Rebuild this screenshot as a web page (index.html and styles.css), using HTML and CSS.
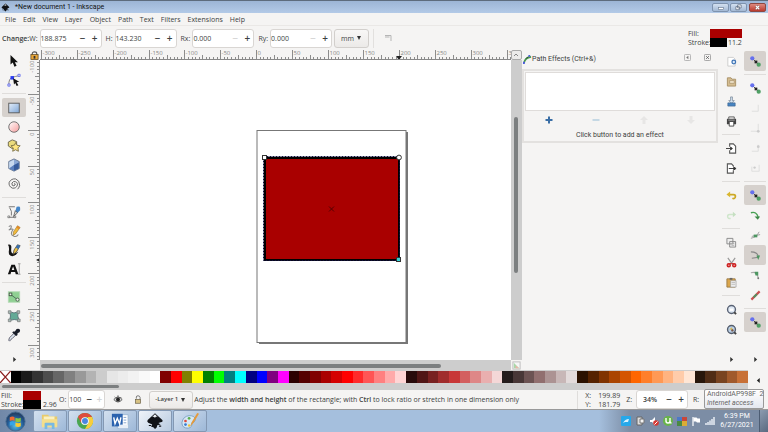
FILE: index.html
```html
<!DOCTYPE html>
<html lang="en">
<head>
<meta charset="utf-8">
<title>*New document 1 - Inkscape</title>
<link rel="stylesheet" href="styles.css">
</head>
<body>
<svg class="defs" aria-hidden="true">
  <defs>
    <linearGradient id="gBlue" x1="0" y1="0" x2="1" y2="1"><stop offset="0" stop-color="#e4eefa"/><stop offset="1" stop-color="#7fa6d6"/></linearGradient>
    <linearGradient id="gPink" x1="0" y1="0" x2="1" y2="1"><stop offset="0" stop-color="#fff"/><stop offset="1" stop-color="#f79c9c"/></linearGradient>
    <radialGradient id="gOrb" cx=".5" cy=".7" r=".6"><stop offset="0" stop-color="#59c4ee"/><stop offset=".7" stop-color="#245a94"/><stop offset="1" stop-color="#234168"/></radialGradient>
    <symbol id="nodes" viewBox="0 0 12 12"><path d="M3 3l6 6" stroke="#444" stroke-width="1"/><circle cx="2.500" cy="2.500" r="2.300" fill="#6670ee"/><circle cx="9.500" cy="9.500" r="2.300" fill="#4fa065"/><rect x="5" y="5" width="3" height="3" fill="#222"/></symbol>
    <symbol id="inkscape" viewBox="0 0 16 16"><path d="M8 1l6.500 6q1 1.500-1.500 2l-2 .8 2 1.200-3 .8-.5 2L8 15l-1.500-1.500-2-.5L5.500 11 2 9.500Q.5 8.500 1.500 7z" fill="#101216"/><path d="M8 2L5.500 4.500 6.800 4.300l1.200.7 1-1 1.500.6z" fill="#eef2f6"/><path d="M2.500 12h2M11.500 12.500h2" stroke="#101216"/></symbol>
    <symbol id="more" viewBox="0 0 6 6"><path d="M1.500 0l3.500 3-3.500 3z" fill="#333"/></symbol>
  </defs>
</svg>

<header class="titlebar">
  <svg class="app-icon" viewBox="0 0 16 16"><use href="#inkscape"/></svg>
  <h1>*New document 1 - Inkscape</h1>
  <div class="window-buttons">
    <button aria-label="Minimize"><svg viewBox="0 0 16 8"><rect x="5.500" y="4" width="6" height="2.500" fill="#fff" stroke="#64758c" stroke-width=".7"/></svg></button>
    <button aria-label="Restore"><svg viewBox="0 0 16 8"><path d="M7 1h4v3.500H7zM5 3h4v3.500H5z" fill="#fff" stroke="#536278" stroke-width=".8"/></svg></button>
    <button class="close" aria-label="Close"><svg viewBox="0 0 16 8"><path d="M6 2l4 4M10 2L6 6" stroke="#633" stroke-width="2.400"/><path d="M6 2l4 4M10 2L6 6" stroke="#fff" stroke-width="1.500"/></svg></button>
  </div>
</header>

<nav class="menubar">
  <a href="#">File</a><a href="#">Edit</a><a href="#">View</a><a href="#">Layer</a><a href="#">Object</a><a href="#">Path</a><a href="#">Text</a><a href="#">Filters</a><a href="#">Extensions</a><a href="#">Help</a>
</nav>

<div class="options">
  <b>Change:</b>
  <label for="w">W:</label>
  <div class="spin"><input id="w" value="188.875"><button aria-label="Decrease width">−</button><button aria-label="Increase width">+</button></div>
  <label for="h">H:</label>
  <div class="spin"><input id="h" value="143.230"><button aria-label="Decrease height">−</button><button aria-label="Increase height">+</button></div>
  <label for="rx">Rx:</label>
  <div class="spin"><input id="rx" value="0.000"><button disabled aria-label="Decrease Rx">−</button><button aria-label="Increase Rx">+</button></div>
  <label for="ry">Ry:</label>
  <div class="spin"><input id="ry" value="0.000"><button disabled aria-label="Decrease Ry">−</button><button aria-label="Increase Ry">+</button></div>
  <div class="drop unit"><select aria-label="Units"><option>mm</option></select></div>
  <button class="corner-btn" aria-label="Make corners sharp"><svg viewBox="0 0 8 8"><path d="M1 1.500h6V7M1 3h4.500" fill="none" stroke="#b5b5b5"/></svg></button>
  <div class="style-indicator">
    <span>Fill:</span><i class="red"></i>
    <span>Stroke:</span><i class="black"></i><span>11.2</span>
  </div>
</div>

<main class="work">
  <div class="toolbox">
    <button aria-label="Select"><svg viewBox="0 0 16 16"><path d="M4 1v11l2.600-2.200L8.500 14.500l2.500-1.200-2-4H12.500z" fill="#111"/></svg></button>
    <button aria-label="Edit nodes"><svg viewBox="0 0 16 16"><path d="M2 14Q2 6 6 5q3-1 8-2" fill="none" stroke="#777"/><path d="M1 12.500h2.500V15H1zM12.500 1.500H15V4h-2.500z" fill="#dde" stroke="#6872f0"/><path d="M4 3.500h4v4H4z" fill="#2b3cf0"/><path d="M7 6l7 4-3 .5 2 3.500-2 .8-1.500-3.300L8 13z" fill="#111"/></svg></button>
    <hr>
    <button class="on" aria-label="Rectangle"><svg viewBox="0 0 16 16"><rect x="2" y="2.500" width="12" height="11" fill="url(#gBlue)" stroke="#555"/></svg></button>
    <button aria-label="Ellipse"><svg viewBox="0 0 16 16"><circle cx="8" cy="8" r="6" fill="url(#gPink)" stroke="#666"/></svg></button>
    <button aria-label="Star"><svg viewBox="0 0 16 16"><path d="M6 1l5 2v5L6 11 1.500 8V3.500z" fill="#eadb7c" stroke="#665f43"/><path d="M10 4l1.500 3.200 3.500.5-2.500 2.500.5 3.800-3.200-1.700L6.500 14l.7-3.800L4.500 7.700 8.500 7z" fill="#ffe680" stroke="#776d43"/></svg></button>
    <button aria-label="3D box"><svg viewBox="0 0 16 16"><path d="M8 1l6 3v8l-6 3-6-3V4z" fill="#8ca9d6" stroke="#66738a"/><path d="M2.500 4.500L8 2v6l-5.500 4z" fill="#c8d9ee"/><path d="M8 8l5.500-3v7L8 14.500z" fill="#365b9b"/><path d="M8 8v6.500L2.500 12z" fill="#5c80bd"/></svg></button>
    <button aria-label="Spiral"><svg viewBox="0 0 16 16"><path d="M8 8q1.500-1 1.500.8Q8 11 6 9.500 4.500 6.500 7.500 5.200 12 4.800 12 9 10.500 13.500 6 12.700 1.500 10.500 2.500 6 5 1.500 10 2.200 14.500 4 14.500 9.500 13.500 13 12 14" fill="none" stroke="#666" stroke-width="1.100"/></svg></button>
    <hr>
    <button aria-label="Pen"><svg viewBox="0 0 16 16"><path d="M2 2h7M3 3q3 4 2 9M1 14h9" fill="none" stroke="#666"/><path d="M1 12.500h2v2H1zM8 12.500h2v2H8z" fill="#fff" stroke="#555" stroke-width=".7"/><path d="M11 2q4-1 4 1v3l-3 3-2.500-2z" fill="#4787c8"/><path d="M9.500 6.500L12 9l-4.500 4z" fill="#ddd" stroke="#444" stroke-width=".8"/></svg></button>
    <button aria-label="Pencil"><svg viewBox="0 0 16 16"><path d="M2 3q3-2 3 0T2 7q4-2 5-1-2 3-2 5t3 3 5-2" fill="none" stroke="#888" stroke-width="1.200"/><path d="M12 2l3 2-5 7-3 2 .3-4z" fill="#f2b93a" stroke="#80652a" stroke-width=".6"/><path d="M12 2l3 2-1.500 2-3-2z" fill="#e08a2a"/></svg></button>
    <button aria-label="Calligraphy"><svg viewBox="0 0 16 16"><path d="M1 2q4-1 4 3-1 7 2 7 3 0 6-2-3 5-7 5-4 0-4-5 1-6-1-8z" fill="#161616"/><path d="M12 2l3 1-4 7-4 3 1-5z" fill="#e8bf45" stroke="#333" stroke-width=".8"/><path d="M12 2l3 1-2 4-3-2z" fill="#386faf"/></svg></button>
    <button aria-label="Text"><svg viewBox="0 0 16 16"><path fill-rule="evenodd" d="M1 14L5 3h4l4 11h-3l-.7-2.500H4.700L4 14zm4.400-4.800h3L7 5z" fill="#111"/><path d="M14 2v12M12.500 2h3M12.500 14h3" stroke="#999"/></svg></button>
    <hr>
    <button aria-label="Gradient"><svg viewBox="0 0 16 16"><rect x="1.500" y="2" width="13" height="12" fill="#8fd092" stroke="#b5d9b6"/><path d="M4 5l8 6" stroke="#465"/><rect x="2.500" y="3.500" width="3" height="3" fill="#e8f5e8" stroke="#454"/><circle cx="12" cy="11" r="1.800" fill="#e8f5e8" stroke="#454"/></svg></button>
    <button aria-label="Mesh"><svg viewBox="0 0 16 16"><path d="M3 3q5 3 10 0-2 5 1 10-6-2-11 0 2-5 0-10z" fill="#63aa96" stroke="#4d6f72"/><path d="M1.500 2h3v3h-3zM11.500 2h3v3h-3zM1.500 11.500h3v3h-3zM12 11.500h3v3h-3z" fill="#a9bdb9" stroke="#777" stroke-width=".8"/></svg></button>
    <button aria-label="Dropper"><svg viewBox="0 0 16 16"><path d="M2 14q0-3 3-5l3-3 2 2-4 4q-2 1-3 3z" fill="#dde5ee" stroke="#556"/><path d="M7 4l2 0 2-3q4-1 4 2 0 2-3 3v2l-1.500 1L6 5z" fill="#171b26"/></svg></button>
    <button class="more" aria-label="More tools"><svg viewBox="0 0 6 6"><use href="#more"/></svg></button>
  </div>

  <section class="document">
    <div class="lock"><svg viewBox="0 0 10 10"><path d="M2.500 5V3q0-2 2.500-2t2.500 2v2" fill="none" stroke="#555" stroke-width="1.200"/><rect x="1" y="4" width="8" height="5.500" fill="#e9a638" stroke="#5b4520" stroke-width=".8"/><rect x="4" y="5.500" width="2" height="3" fill="#333"/></svg></div>
    <svg class="ruler-h" id="rulerH"></svg>
    <button class="scroll-up" aria-label="Scroll up"><svg viewBox="0 0 8 8"><path d="M2 5l2-2 2 2" fill="none" stroke="#888"/></svg></button>
    <svg class="ruler-v" id="rulerV"></svg>
    <svg class="canvas" role="img" aria-label="Drawing">
      <rect x="219" y="72" width="149" height="212" fill="#777"/>
      <rect x="217" y="70.500" width="149" height="212" fill="#fff" stroke="#777" stroke-width="1"/>
      <rect x="225" y="98" width="134" height="102" fill="#a90000" stroke="#000" stroke-width="2"/>
      <rect x="223.500" y="96.500" width="136" height="104" fill="none" stroke="#11113a" stroke-width="1" stroke-dasharray="2 1"/>
      <path d="M289 146.500l5 5M294 146.500l-5 5" stroke="#500"/>
      <rect x="222.500" y="95.500" width="4" height="4" fill="#fff" stroke="#333"/>
      <circle cx="359" cy="97.500" r="2.400" fill="#fff" stroke="#333"/>
      <rect x="356.500" y="197.500" width="4" height="4" fill="#36d6d6" stroke="#333"/>
    </svg>
    <div class="scroll-v"><i></i></div>
    <div class="scroll-h"><i></i></div>
    <div class="cms"><svg viewBox="0 0 10 10"><rect x="1" y="1" width="8" height="8" fill="#f6f6f6" stroke="#bbb"/><path d="M2 2l6 6H2z" fill="#a7d9a8"/><path d="M4 5l4 3H4z" fill="#efb0a8"/></svg></div>
  </section>

  <aside class="dock">
    <div class="dock-head">
      <svg viewBox="0 0 10 10"><path d="M1 9q1-6 8-7" fill="none" stroke="#4a9a50" stroke-width="2"/><path d="M0 7.500h2v2.500H0zM6 0h2v2H6z" fill="#4c5be0"/><path d="M3 4l3-2" stroke="#243"/></svg>
      <h2>Path Effects (Ctrl+&amp;)</h2>
      <button aria-label="Iconify dock"><svg viewBox="0 0 8 8"><rect x=".5" y=".5" width="7" height="7" rx="1" fill="none" stroke="#aaa"/><path d="M5 2v4L2.500 4z" fill="#777"/></svg></button>
      <button aria-label="Close dock"><svg viewBox="0 0 8 8"><rect x=".5" y=".5" width="7" height="7" rx="1" fill="none" stroke="#999"/><path d="M2.500 2.500l3 3M5.500 2.500l-3 3" stroke="#555"/></svg></button>
    </div>
    <div class="effects">
      <div class="effect-list"></div>
      <div class="effect-actions">
        <button aria-label="Add effect"><svg viewBox="0 0 8 8"><path d="M4 .5v7M.5 4h7" stroke="#3a6ea5" stroke-width="2"/></svg></button>
        <button aria-label="Remove effect" disabled><svg viewBox="0 0 8 8"><path d="M.5 4h7" stroke="#c5d8e4" stroke-width="2"/></svg></button>
        <button aria-label="Move up" disabled><svg viewBox="0 0 8 8"><path d="M4 0l4 4H5.500v4h-3V4H0z" fill="#e7e6e5"/></svg></button>
        <button aria-label="Move down" disabled><svg viewBox="0 0 8 8"><path d="M4 8l4-4H5.500V0h-3v4H0z" fill="#e7e6e5"/></svg></button>
      </div>
      <p>Click button to add an effect</p>
    </div>
  </aside>

  <div class="bar commands">
    <button aria-label="New"><svg viewBox="0 0 12 12"><path d="M2 1.500h6l2 2V11H2z" fill="#fff" stroke="#ccc"/><circle cx="8.500" cy="6.500" r="2" fill="#dce9f8" stroke="#3d73b4" stroke-width="1.400"/></svg></button>
    <button aria-label="Open"><svg viewBox="0 0 12 12"><path d="M1.500 2h4l1 1.500h4V11h-9z" fill="#d5bd91" stroke="#a99066"/><path d="M4 5h5v3H4z" fill="#eee2c9" stroke="#9a825c" stroke-width=".6"/></svg></button>
    <button aria-label="Save"><svg viewBox="0 0 12 12"><path d="M5 1h2v4h2L6 8 3 5h2z" fill="#d5e4f2" stroke="#68788a" stroke-width=".7"/><path d="M2 7.500h8V11H2z" fill="#4684c2" stroke="#40658f" stroke-width=".7"/></svg></button>
    <button aria-label="Print"><svg viewBox="0 0 12 12"><path d="M3 3V1h6v2" fill="none" stroke="#555"/><path d="M1 3h10v6H1z" fill="#444"/><path d="M3.500 6h5v5h-5z" fill="#fff" stroke="#444"/><path d="M2.500 4.500h7" stroke="#aaa"/></svg></button>
    <hr>
    <button aria-label="Import"><svg viewBox="0 0 12 12"><path d="M4 4V1h4l2.500 2.500V11H4V8" fill="#fff" stroke="#555" stroke-width="1.200"/><path d="M0 6h5M5 4.500L7 6 5 7.500z" stroke="#333" fill="#333"/></svg></button>
    <button aria-label="Export"><svg viewBox="0 0 12 12"><path d="M8 4V3L6 1H1.500v10H8V8" fill="#fff" stroke="#555" stroke-width="1.200"/><path d="M3 6h6M8.500 4.500L11 6 8.500 7.500z" stroke="#333" fill="#333"/></svg></button>
    <hr>
    <button aria-label="Undo"><svg viewBox="0 0 12 12"><path d="M3 5h5q3 0 2 3-1 2-3 1" fill="none" stroke="#cda925" stroke-width="2"/><path d="M4.500 1.500v6.500L.5 5z" fill="#d9b62e"/></svg></button>
    <button aria-label="Redo" disabled><svg viewBox="0 0 12 12"><path d="M9 5H4q-3 0-2 3 1 2 3 1" fill="none" stroke="#cfe6cb" stroke-width="1.600"/><path d="M7.500 2v6L11 5z" fill="#c5dfc1"/></svg></button>
    <hr>
    <button aria-label="Copy"><svg viewBox="0 0 12 12"><path d="M1 1.500h6.500v6H1zM4 5h6.500v6H4z" fill="#eee" stroke="#888"/><path d="M6 7h3M6 9h3" stroke="#aaa"/></svg></button>
    <button aria-label="Cut"><svg viewBox="0 0 12 12"><path d="M2 1l5 7M10 1L5 8" stroke="#999" stroke-width="1.300"/><path d="M6 7L3 7.500M6 7l3 .5" stroke="#c22"/><circle cx="3" cy="9" r="1.700" fill="#e88" stroke="#cc2424" stroke-width="1.500"/><circle cx="9" cy="9" r="1.700" fill="#e88" stroke="#cc2424" stroke-width="1.500"/></svg></button>
    <button aria-label="Paste"><svg viewBox="0 0 12 12"><path d="M1 2h9v9H1z" fill="#dba64c" stroke="#9b7b45"/><path d="M4 1h3v2H4z" fill="#666"/><path d="M5 4h6v7H5z" fill="#eee" stroke="#999" stroke-width=".7"/><path d="M6 6h4M6 8h4" stroke="#aaa" stroke-width=".7"/></svg></button>
    <hr>
    <button aria-label="Zoom selection"><svg viewBox="0 0 12 12"><circle cx="6" cy="6" r="4.300" fill="#dce6f2" stroke="#596273" stroke-width="1.500"/><path d="M4 5h4v2.500H4z" fill="#fff"/><path d="M9 9l2 2" stroke="#444" stroke-width="2"/></svg></button>
    <button aria-label="Zoom drawing"><svg viewBox="0 0 12 12"><circle cx="6" cy="6" r="4.300" fill="#b9cfe8" stroke="#555d6b" stroke-width="1.500"/><path d="M3.500 6L6 3.500l2 3z" fill="#d8ba5c"/><circle cx="7" cy="7" r="1.300" fill="#754"/><path d="M9 9l2 2" stroke="#444" stroke-width="2"/></svg></button>
    <button class="more" aria-label="More commands"><svg viewBox="0 0 6 6"><use href="#more"/></svg></button>
  </div>

  <div class="bar snap">
    <button class="on" aria-label="Enable snapping"><svg><use href="#nodes"/></svg></button>
    <hr>
    <button aria-label="Snap bounding boxes"><svg><use href="#nodes"/></svg></button>
    <button disabled aria-label="Snap edges"><svg viewBox="0 0 12 12"><path d="M9 2v7H2" fill="none" stroke="#ddd"/></svg></button>
    <button disabled aria-label="Snap corners"><svg viewBox="0 0 12 12"><path d="M9 1v8H1" fill="none" stroke="#ddd"/><circle cx="9" cy="9" r="1.500" fill="#ccc"/></svg></button>
    <button disabled aria-label="Snap edge midpoints"><svg viewBox="0 0 12 12"><path d="M9 2v7H2" fill="none" stroke="#ddd"/><circle cx="9" cy="4" r="1.500" fill="#ccc"/></svg></button>
    <button disabled aria-label="Snap centers"><svg viewBox="0 0 12 12"><path d="M10 2v7H2V4" fill="none" stroke="#ddd"/><circle cx="5" cy="5" r="1.300" fill="#ccc"/></svg></button>
    <hr>
    <button class="on" aria-label="Snap nodes"><svg><use href="#nodes"/></svg></button>
    <button aria-label="Snap paths"><svg viewBox="0 0 12 12"><path d="M1 3q6-2 8 5" fill="none" stroke="#46a052" stroke-width="1.500"/><path d="M5 7l6 0-2.500 3.500z" fill="#3b8846"/></svg></button>
    <button aria-label="Snap intersections"><svg viewBox="0 0 12 12"><path d="M1 9q6-1 9-7M2 7l9-2" fill="none" stroke="#999"/><path d="M4 5h4v3H4z" fill="#4d9661"/></svg></button>
    <button class="on" aria-label="Snap cusp nodes"><svg viewBox="0 0 12 12"><path d="M1 2q8 0 8 6l-7 1" fill="none" stroke="#888" stroke-width="1.200"/><path d="M7 6h4l-2 5z" fill="#4d9661"/></svg></button>
    <button aria-label="Snap smooth nodes"><svg viewBox="0 0 12 12"><path d="M1 3q7-2 8 6" fill="none" stroke="#aaa" stroke-width="1.200"/><path d="M5 2h4v4H6z" fill="#4d9661"/><circle cx="9" cy="9" r="1" fill="#777"/></svg></button>
    <button aria-label="Snap midpoints"><svg viewBox="0 0 12 12"><path d="M1.500 10.500L10.500 1.500" stroke="#c94f4f" stroke-width="2.400"/><path d="M4 8l3.500-3.500" stroke="#4d9661" stroke-width="2"/></svg></button>
    <hr>
    <button class="on" aria-label="Snap others"><svg><use href="#nodes"/></svg></button>
    <button class="more" aria-label="More snapping"><svg viewBox="0 0 6 6"><use href="#more"/></svg></button>
  </div>
</main>

<div class="palette">
  <div class="palette-body">
    <div class="swatches" id="swatches">
      <button class="none" aria-label="No color"><svg viewBox="0 0 11 12" preserveAspectRatio="none"><path d="M0 0l11 12M11 0L0 12" stroke="#8c2020" stroke-width="1.300"/></svg></button>
    </div>
    <div class="palette-scroll"><i></i></div>
  </div>
  <button class="palette-menu" aria-label="Palette menu"><svg viewBox="0 0 6 6"><path d="M4.500 0L1 3l3.500 3z" fill="#222"/></svg></button>
</div>

<footer class="status">
  <div class="paint">
    <span>Fill:</span><i class="red"></i><span></span>
    <span>Stroke:</span><i class="black"></i><span>2.96</span>
  </div>
  <label for="op">O:</label>
  <div class="spin opacity"><input id="op" value="100"><button aria-label="Less opaque">−</button><button disabled aria-label="More opaque">+</button></div>
  <button class="tiny" aria-label="Layer visibility"><svg viewBox="0 0 12 10"><path d="M1 5q5-6 10 0-5 6-10 0z" fill="#ddd" stroke="#444"/><circle cx="6" cy="5" r="2.400" fill="#222"/><path d="M2 2l1 1M6 0v2M10 2L9 3" stroke="#444"/></svg></button>
  <button class="tiny" aria-label="Layer lock"><svg viewBox="0 0 12 10"><path d="M4 4V2q0-1.500 2-1.500t2.500 2V5" fill="none" stroke="#666"/><rect x="3" y="5" width="6" height="4.500" fill="#d8c283" stroke="#665c40" stroke-width=".8"/></svg></button>
  <div class="drop layer"><select aria-label="Layer"><option>-Layer 1</option></select></div>
  <p class="hint">Adjust the <b>width and height</b> of the rectangle; with <b>Ctrl</b> to lock ratio or stretch in one dimension only</p>
  <dl class="coords"><dt>X:</dt><dd>199.89</dd><dt>Y:</dt><dd>181.79</dd></dl>
  <label for="zoom">Z:</label>
  <div class="spin zoom"><input id="zoom" value="34%"><button aria-label="Zoom out">−</button><button aria-label="Zoom in">+</button></div>
  <div class="rotation">R:
    <div class="tip"><span>AndroidAP998F&nbsp; 2</span><em>Internet access</em></div>
  </div>
</footer>

<div class="taskbar">
  <button class="start" aria-label="Start"><svg viewBox="0 0 22 22"><circle cx="11" cy="11" r="10" fill="url(#gOrb)" stroke="#476b91"/><path d="M5 6.500q3-1.500 5 0v4q-2-1.500-5 0z" fill="#ef6a32"/><path d="M11 7q3 1.500 5.500 0v4q-3 1.500-5.500 0z" fill="#8cc63f"/><path d="M5 11.500q3-1.500 5 0v4q-2-1.500-5 0z" fill="#35a4e8"/><path d="M11 12q3 1.500 5.500 0v4q-3 1.500-5.500 0z" fill="#fbc92e"/></svg></button>
  <button class="task" aria-label="Explorer"><svg viewBox="0 0 20 20"><path d="M1 3h7l1 2h9v11H1z" fill="#e8cb6c"/><path d="M3 5h12v8H3z" fill="#fbf1c0"/><path d="M1 8h17v9H1z" fill="#f4de8c"/><path d="M4 19v-6q0-1 1-1h9q1 0 1 1v6h-3v-4H7v4z" fill="#79b9e2"/></svg></button>
  <button class="task" aria-label="Chrome"><svg viewBox="0 0 20 20"><circle cx="10" cy="10" r="9" fill="#4aa651"/><path d="M2.200 5.500A9 9 0 0 1 17.800 5.500H10L6 12.500z" fill="#dd4b3e"/><path d="M17.800 5.500A9 9 0 0 1 10 19l4-7-1-6.500z" fill="#f8cd3c"/><circle cx="10" cy="10" r="4.300" fill="#fff"/><circle cx="10" cy="10" r="3.300" fill="#4a86e0"/></svg></button>
  <button class="task" aria-label="Word"><svg viewBox="0 0 20 20"><path d="M7 3h12v15H7z" fill="#fff" stroke="#9bb5d2"/><path d="M14 6h3M14 9h3M14 12h3" stroke="#7a9cc8"/><path d="M1 2h12v14H1z" fill="#2b62ae"/><path d="M3 6l1.500 7L7 7l2.500 6L11 6" fill="none" stroke="#fff" stroke-width="1.600"/><path d="M9 14h10v4H9z" fill="#e8eef6"/></svg></button>
  <button class="task active" aria-label="Inkscape"><svg viewBox="0 0 16 16"><use href="#inkscape"/></svg></button>
  <button class="task" aria-label="Paint"><svg viewBox="0 0 20 20"><path d="M1 12Q2 5 9 4q7 0 7 5-1 3-4 3 1 5-4 6-7 0-7-6z" fill="#d6e8f6" stroke="#7aa0c2"/><circle cx="5" cy="10" r="1.500" fill="#e04a3c"/><circle cx="9" cy="7" r="1.500" fill="#5aaf4d"/><circle cx="5" cy="14" r="1.500" fill="#387bd0"/><circle cx="9" cy="15" r="1.300" fill="#f0c33b"/><path d="M18 1l-6 10-2 5 4-4 6-10z" fill="#e49a3c"/></svg></button>
  <div class="tray">
    <svg viewBox="0 0 10 10"><rect width="10" height="10" rx="1" fill="#26a8ea"/><path d="M2 7q2-4 6-4l-1 3-3 0z" fill="#d9f2ff"/></svg>
    <svg viewBox="0 0 10 10"><path d="M2 1h5v8H2z" fill="#ddd" stroke="#666"/><path d="M5 3h4v4H5z" fill="#f4f4f4" stroke="#777"/></svg>
    <svg viewBox="0 0 10 10"><path d="M1 4h2l3-3v8L3 6H1z" fill="#fff"/><circle cx="7" cy="7" r="2.800" fill="#d63a35"/><path d="M5.500 8.500l3-3" stroke="#fff"/></svg>
    <svg viewBox="0 0 10 10"><circle cx="5" cy="5" r="5" fill="#68b548"/><path d="M3 2v3q0 2 2 2t2-2V2M7 5q0 2 1.500 2" fill="none" stroke="#fff" stroke-width="1.400"/></svg>
    <svg viewBox="0 0 10 10"><path d="M0 1h5v4H0z" fill="#4b79c9"/><path d="M5 1h5v4H5z" fill="#c9463a"/><path d="M0 5h5v5H0z" fill="#4b8a43"/><path d="M5 5h5v5H5z" fill="#d9ac35"/></svg>
    <svg viewBox="0 0 10 10"><path d="M2 1v9" stroke="#fff" stroke-width="1.200"/><path d="M2.500 1.500h3l1 1H9v4H6l-1-1H2.500z" fill="#fff"/></svg>
    <svg viewBox="0 0 10 10"><path d="M1 9V7M3 9V6M5 9V4.500M7 9V3M9 9V1" stroke="#e7edf4" stroke-width="1.500"/></svg>
  </div>
  <time class="clock"><span>6:39 PM</span><span>6/27/2021</span></time>
  <button class="show-desktop" aria-label="Show desktop"></button>
</div>
<script src="app.js"></script>
</body>
</html>
```

FILE: styles.css
```css
* { box-sizing: border-box; }
body {
  margin: 0;
  min-height: 100vh;
  display: flex;
  flex-direction: column;
  background: #f5f4f3;
  color: #3c3f41;
  font: 7px/9px "Open Sans", "Noto Sans", sans-serif;
  overflow: hidden;
}
button, input, select { font: inherit; color: inherit; margin: 0; padding: 0; border: 0; background: none; border-radius: 0; }
h1, h2, p, dl, dd { margin: 0; font: inherit; }
svg { display: block; }
hr { border: 0; border-top: 1px solid #dfdddb; margin: 0; }
.defs { position: absolute; width: 0; height: 0; }

.titlebar {
  display: flex;
  align-items: center;
  height: 13px;
  border-top: 1px solid #5d6c7d;
  background: linear-gradient(#9cb5d5, #b3cae7);
  color: #111;
  font-family: Roboto, sans-serif;
}
.app-icon { width: 9px; height: 9px; margin: 0 5px 0 1px; }
.titlebar h1 { flex: 1; }
.window-buttons { display: flex; gap: 1px; padding-right: 2px; }
.window-buttons button { width: 17px; height: 9px; border: 1px solid #7e93ae; border-radius: 2px; background: linear-gradient(#d3e0f0, #a3b9d4); }
.window-buttons svg { width: 100%; height: 7px; }
.window-buttons .close { background: linear-gradient(#de8a80, #bb3a2e); border-color: #8e4842; margin-left: 1px; }

.menubar { display: flex; gap: 7px; align-items: center; height: 13px; padding: 0 5px; border-bottom: 1px solid #eae8e6; }
.menubar a { color: inherit; text-decoration: none; }

.options { display: flex; align-items: center; height: 24px; padding-left: 2px; }
.options label { margin: 0 2px 0 4px; }
.options > b { font-weight: 600; margin-right: -4px; }
.spin { display: flex; width: 62px; height: 19px; background: #fff; border: 1px solid #d9d6d3; border-radius: 3px; }
.spin input { flex: 1; min-width: 0; }
.spin button { width: 12px; font-size: 10px; font-weight: 600; }
.spin button:disabled { color: #d5d5d5; }
.drop { position: relative; border: 1px solid #d2cfcc; border-radius: 3px; background: linear-gradient(#f8f7f6, #eceae8); }
.drop select { appearance: none; width: 100%; height: 100%; }
.drop::after { content: ""; position: absolute; right: 7px; top: 50%; margin-top: -2px; border: 2px solid transparent; border-top: 4px solid #333; border-bottom: 0; pointer-events: none; }
.unit { width: 35px; height: 19px; margin-left: 2px; }
.unit select { padding-left: 6px; }
.corner-btn { width: 24px; height: 19px; margin-left: 4px; border-left: 1px solid #e2e0de; }
.corner-btn svg { width: 8px; height: 8px; margin-left: 10px; }
.style-indicator { display: grid; grid-template-columns: 22px 17px 15px; grid-template-rows: 9px 9px; margin-left: auto; margin-right: 26px; }
.style-indicator .red { grid-column: span 2; }
.style-indicator span:last-child { padding-left: 1px; }
.red { background: #a90000; }
.black { background: #000; }

.work { flex: 1; display: flex; min-height: 0; }
.toolbox { width: 28px; padding: 1px 2px 0; display: flex; flex-direction: column; }
.toolbox button { height: 19px; width: 24px; display: grid; place-items: center; border-radius: 2px; }
.toolbox svg { width: 14px; height: 14px; }
.toolbox hr { margin: 4px 0; }
.on { background: #d6d1cd; }
.toolbox .more, .bar .more { height: 12px; margin-top: auto; margin-bottom: 5px; }
.toolbox .more svg, .bar .more svg { width: 5px; height: 5px; }

.document { flex: 1; min-width: 0; display: grid; grid-template: 10px minmax(0, 1fr) 10px / 12px minmax(0, 1fr) 11px; }
.lock { display: grid; place-items: center; }
.lock svg { width: 9px; height: 9px; }
.ruler-h, .ruler-v, .canvas { width: 100%; height: 100%; overflow: hidden; }
.ruler-h { border-bottom: 1px solid #888; }
.ruler-v { border-right: 1px solid #888; }
.ruler-h text, .ruler-v text { font-size: 6px; fill: #888; }
.ruler-h path, .ruler-v path { stroke: #8c8c8c; fill: none; }
.canvas { background: #fff; }
.scroll-up { border: 1px solid #aaa; border-radius: 2px; background: #ecebea; }
.scroll-up svg { width: 8px; height: 8px; }
.scroll-v { background: #cdcdcd; padding-left: 3px; }
.scroll-v i { display: block; width: 4px; height: 52%; margin-top: 57px; border-radius: 2px; background: #7c7f80; }
.scroll-h { grid-column: 2; background: #cdcdcd; padding: 4px 0 0 1px; }
.scroll-h i { display: block; width: 85%; height: 4px; border-radius: 2px; background: #7c7f80; }
.cms { display: grid; place-items: center; }
.cms svg { width: 9px; height: 9px; }

.dock { width: 198px; padding-right: 2px; font-family: Roboto, sans-serif; }
.dock-head { display: flex; align-items: center; height: 19px; padding: 0 7px 0 1px; }
.dock-head > svg { width: 9px; height: 9px; }
.dock-head h2 { flex: 1; }
.dock-head button { margin: -5px 0 0 13px; }
.dock-head button svg { width: 7px; height: 7px; }
.effects { border: 2px solid #e3e1df; padding: 1px; height: 74px; }
.effect-list { height: 39px; background: #fff; border: 1px solid #dfdcda; }
.effect-actions { display: grid; grid-template-columns: repeat(4, 1fr); height: 18px; }
.effect-actions button { display: grid; place-items: center; }
.effect-actions svg { width: 8px; height: 8px; }
.effects p { text-align: center; margin-top: 2px; }

.bar { display: flex; flex-direction: column; padding: 1px 2px 0; }
.bar button { height: 20px; display: grid; place-items: center; border-radius: 2px; }
.bar svg { width: 11px; height: 11px; }
.bar hr { margin: 3px 0; }
.commands { width: 22px; }
.snap { width: 26px; }

.palette { display: flex; height: 20px; }
.palette-body { flex: 1; background: #cdcdcd; padding-top: 1px; }
.swatches { display: flex; height: 12px; }
.swatches button { flex: 1; min-width: 0; }
.swatches .none { background: #fff; }
.swatches svg { width: 100%; height: 12px; }
.palette-scroll { padding: 2px 0 0 2px; }
.palette-scroll i { display: block; width: 117px; height: 3px; border-radius: 2px; background: #7c7f80; }
.palette-menu { width: 20px; }
.palette-menu svg { width: 5px; height: 5px; margin: 0 auto; }

.status { display: flex; align-items: center; height: 20px; padding-left: 1px; border-bottom: 1px solid #999; }
.paint { display: grid; grid-template: 9px 9px / 22px 18px 17px; align-items: center; }
.paint i { height: 100%; }
.paint span:last-child { padding-left: 2px; }
.status label { margin: 0 2px 0 1px; }
.opacity { width: 37px; }
.opacity button { width: 10px; }
.tiny { width: 20px; }
.tiny svg { width: 10px; height: 9px; margin: 0 auto; }
.opacity + .tiny { margin-left: 3px; }
.layer { width: 44px; height: 18px; margin-left: 1px; font-size: 6px; font-weight: 600; }
.layer select { padding-left: 5px; }
.hint { flex: 1; padding-left: 1px; white-space: nowrap; }
.hint b { font-weight: 600; }
.coords { display: grid; grid-template: 9px 9px / 12px 24px; padding-left: 6px; border-left: 1px solid #dfdddb; }
.coords dt { padding-left: 1px; }
.coords dd { text-align: right; }
.coords + label { margin: 0 4px 0 6px; }
.zoom { width: 52px; }
.zoom input { padding-left: 6px; font-weight: 600; }
.rotation { position: relative; width: 80px; padding-left: 5px; }
.tip { position: absolute; left: 16px; bottom: -5px; width: 60px; padding: 0 2px; border: 1px solid #999; border-radius: 2px; background: linear-gradient(#fff, #e4e8ef); color: #666; font-family: Roboto, sans-serif; white-space: nowrap; }
.tip span, .tip em { display: block; }

.taskbar { display: flex; height: 22px; gap: 1px; background: linear-gradient(90deg, #7188a8 0, #7f96b5 34px, #a5bfdd 60px, #a5bfdd 78%, #7c8da5 82%, #7c8da5); }
.start { width: 32px; }
.start svg { width: 21px; height: 21px; margin-left: 5px; }
.task { width: 34px; border: 1px solid #8398b3; border-radius: 2px; background: linear-gradient(135deg, #d3e0ef, #9db8d8); }
.task svg { width: 18px; height: 18px; margin: 0 auto; }
.task.active { background: linear-gradient(135deg, #eef3f9, #b9cbe0); }
.tray { display: flex; align-items: center; gap: 4px; margin-left: auto; }
.tray svg { width: 10px; height: 10px; }
.clock { width: 42px; color: #fff; text-align: center; padding-top: 2px; font-family: Roboto, sans-serif; }
.clock span { display: block; }
.show-desktop { width: 9px; border-left: 1px solid #4d5d73; background: linear-gradient(135deg, #8c9bb0, #5a6a80); }
```

FILE: app.js
```js
const colors = (
  "000000 1a1a1a 333333 4d4d4d 666666 808080 999999 b3b3b3 cccccc e6e6e6 ececec f2f2f2 f9f9f9 ffffff " +
  "800000 ff0000 808000 ffff00 008000 00ff00 008080 00ffff 000080 0000ff 800080 ff00ff " +
  "2b0000 550000 800000 aa0000 d40000 ff0000 ff2a2a ff5555 ff8080 ffaaaa ffd5d5 " +
  "280b0b 501616 782121 a02c2c c83737 d35f5f de8787 e9afaf f4d7d7 " +
  "241c1c 483737 6c5353 916f6f ac9393 c8b7b7 e3dbdb " +
  "2b1100 552200 803300 aa4400 d45500 ff6600 ff7f2a ff9955 ffb380 ffccaa ffe6d5 " +
  "28170b 502d16 784421 a05a2c c87137"
).split(" ");
const swatches = document.getElementById("swatches");
for (const color of colors) {
  const button = document.createElement("button");
  button.style.background = "#" + color;
  button.setAttribute("aria-label", "#" + color);
  swatches.append(button);
}

// Pixels per 50 mm at the current zoom level.
const STEP = 35.8;

function drawRuler(id, size, origin, first, vertical) {
  const ruler = document.getElementById(id);
  const box = ruler.getBoundingClientRect();
  const extent = vertical ? box.height : box.width;
  let path = "";
  let labels = "";
  for (let i = 0; ; i++) {
    const pos = Math.round(origin + (first + i / 10) * STEP) + 0.5;
    if (pos > extent) break;
    const length = i % 10 === 0 ? size : i % 5 === 0 ? 5 : 3;
    path += vertical ? `M${size} ${pos}h${-length}` : `M${pos} ${size}v${-length}`;
    if (i % 10 === 0 && pos > -2) {
      const value = (first + i / 10) * 50;
      labels += vertical
        ? `<text transform="translate(6 ${pos + 2}) rotate(-90)" text-anchor="end">${value}</text>`
        : `<text x="${pos + 1}" y="5">${value}</text>`;
    }
  }
  const marker = vertical ? "M12 198l-4 2 4 2z" : "M356 6h6l-3 4z";
  ruler.innerHTML =
    `<path d="${path}"/>${labels}<path d="${marker}" style="fill:#222;stroke:none"/>`;
}
drawRuler("rulerH", 10, 216, -6, false);
drawRuler("rulerV", 12, 70, -2, true);
```
